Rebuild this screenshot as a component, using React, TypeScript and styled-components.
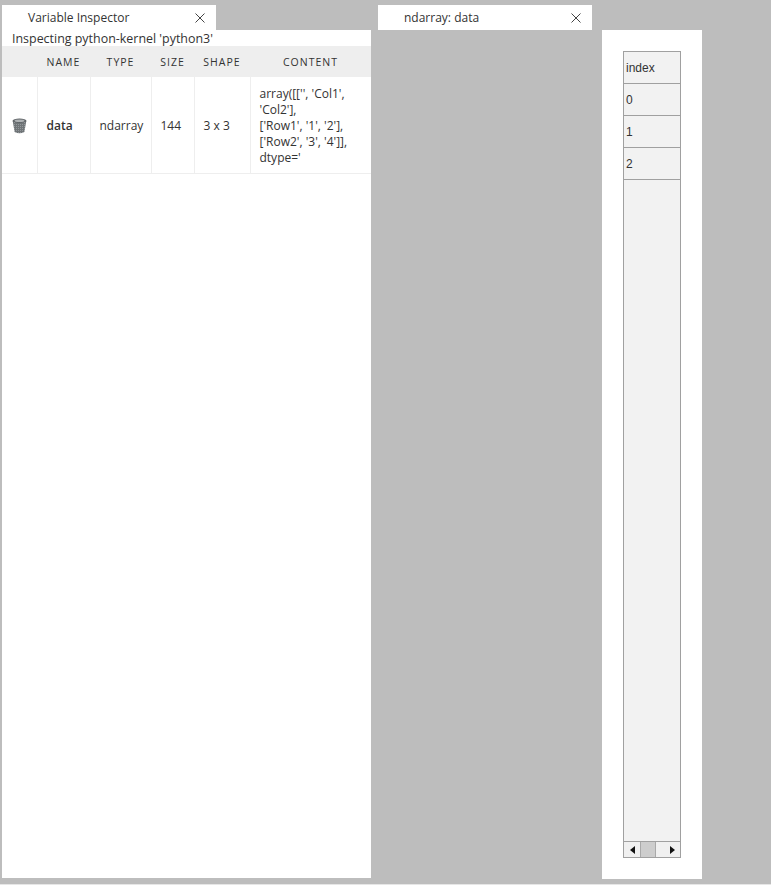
import styled, { createGlobalStyle } from 'styled-components'

const GlobalStyle = createGlobalStyle`
	html, body {
		margin: 0;
		padding: 0;
		height: 885px;
		overflow: hidden;
		background: #e6e6e6;
		font-family: 'Open Sans', 'Noto Sans', sans-serif;
		color: #333;
	}
`

const columns = [
	{ title: '', width: 35 },
	{ title: 'NAME', width: 53 },
	{ title: 'TYPE', width: 61 },
	{ title: 'SIZE', width: 43 },
	{ title: 'SHAPE', width: 56 },
	{ title: 'CONTENT', width: 121 },
]

function CloseIcon() {
	return (
		<svg width="10" height="10" viewBox="0 0 10 10">
			<path d="M0.5 0.5 L9.5 9.5 M9.5 0.5 L0.5 9.5" stroke="#444" strokeWidth="1" fill="none" />
		</svg>
	)
}

function TrashIcon() {
	return (
		<svg width="15" height="16" viewBox="0 0 15 16">
			<defs>
				<pattern id="mesh" width="2" height="2" patternUnits="userSpaceOnUse">
					<rect width="2" height="2" fill="#6f7477" />
					<rect width="1" height="1" fill="#92979a" />
				</pattern>
			</defs>
			<ellipse cx="7.5" cy="3" rx="7" ry="2.4" fill="#5f6467" />
			<ellipse cx="7.5" cy="2.8" rx="5" ry="1.2" fill="#aeb2b4" />
			<path d="M0.8 3.5 L2.6 14 Q7.5 16.5 12.4 14 L14.2 3.5 Q7.5 6.5 0.8 3.5 Z" fill="url(#mesh)" />
		</svg>
	)
}

export default function App() {
	return (
		<>
			<GlobalStyle />
			<Page>
				<InspectorColumn>
					<Tab>
						<TabTitle>Variable Inspector</TabTitle>
						<CloseIcon />
					</Tab>
					<InspectorPanel>
						<Heading>Inspecting python-kernel 'python3'</Heading>
						<VarTable>
							<colgroup>
								{columns.map((c) => (
									<col key={c.title} style={{ width: c.width }} />
								))}
							</colgroup>
							<thead>
								<tr>
									{columns.map((c) => (
										<HeadCell key={c.title}>{c.title}</HeadCell>
									))}
								</tr>
							</thead>
							<tbody>
								<tr>
									<IconCell>
										<TrashIcon />
									</IconCell>
									<NameCell>data</NameCell>
									<Cell>ndarray</Cell>
									<Cell>144</Cell>
									<Cell>3 x 3</Cell>
									<Cell>
										array([['', 'Col1',
										<br />
										'Col2'],
										<br />
										['Row1', '1', '2'],
										<br />
										['Row2', '3', '4']],
										<br />
										dtype='
									</Cell>
								</tr>
							</tbody>
						</VarTable>
					</InspectorPanel>
				</InspectorColumn>
				<DataTab>
					<TabTitle>ndarray: data</TabTitle>
					<CloseIcon />
				</DataTab>
				<GridPanel>
					<Grid>
						<GridRow>index</GridRow>
						<GridRow>0</GridRow>
						<GridRow>1</GridRow>
						<GridRow>2</GridRow>
						<GridBody />
						<ScrollBar>
							<ScrollButton>
								<Arrow $left />
							</ScrollButton>
							<ScrollThumb />
							<ScrollButton $grow>
								<Arrow />
							</ScrollButton>
						</ScrollBar>
					</Grid>
				</GridPanel>
			</Page>
		</>
	)
}

const Page = styled.div`
	height: 884px;
	box-sizing: border-box;
	display: flex;
	align-items: flex-start;
	padding: 5px 0 0 2px;
	background: #bdbdbd;
`
const InspectorColumn = styled.div`
	width: 369px;
	display: flex;
	flex-direction: column;
`
const Tab = styled.div`
	width: 214px;
	height: 25px;
	box-sizing: border-box;
	padding: 0 11px 0 26px;
	background: #fff;
	display: flex;
	align-items: center;
	justify-content: space-between;
`
const DataTab = styled(Tab)`
	margin-left: 7px;
`
const TabTitle = styled.span`
	font-size: 12px;
	color: #333;
`
const InspectorPanel = styled.div`
	height: 848px;
	background: #fff;
`
const Heading = styled.div`
	height: 16px;
	box-sizing: border-box;
	padding: 1px 0 0 10px;
	font-size: 12.45px;
	line-height: 16px;
	color: #333;
`
const VarTable = styled.table`
	width: 369px;
	table-layout: fixed;
	border-collapse: collapse;
`
const HeadCell = styled.th`
	height: 31px;
	padding: 0;
	background: #eeeeee;
	font-size: 10.5px;
	font-weight: 400;
	letter-spacing: 1px;
	text-align: center;
	color: #333;
`
const Cell = styled.td`
	height: 96px;
	box-sizing: border-box;
	padding: 2px 7px 0 9px;
	border-bottom: 1px solid #eeeeee;
	border-left: 1px solid #eeeeee;
	font-size: 12px;
	line-height: 16px;
	color: #333;
	white-space: nowrap;
`
const IconCell = styled(Cell)`
	padding: 2px 0 0 10px;
	border-left: none;

	svg {
		display: block;
	}
`
const NameCell = styled(Cell)`
	font-weight: 600;
`
const GridPanel = styled.div`
	margin: 25px 0 0 10px;
	width: 100px;
	height: 849px;
	box-sizing: border-box;
	padding: 21px 21px;
	background: #fff;
`
const Grid = styled.div`
	width: 58px;
	height: 807px;
	box-sizing: border-box;
	display: flex;
	flex-direction: column;
	background: #f2f2f2;
	border: 1px solid #a0a0a0;
`
const GridRow = styled.div`
	height: 32px;
	flex: none;
	box-sizing: border-box;
	padding: 1px 0 0 2px;
	border-bottom: 1px solid #a0a0a0;
	font-family: 'Liberation Sans', Arial, sans-serif;
	font-size: 12px;
	line-height: 31px;
	color: #333;
`
const GridBody = styled.div`
	flex: 1;
`
const ScrollBar = styled.div`
	height: 15px;
	flex: none;
	display: flex;
	border-top: 1px solid #a0a0a0;
	box-sizing: content-box;
`
const ScrollButton = styled.div<{ $grow?: boolean }>`
	width: 16px;
	flex: ${(p) => (p.$grow ? 1 : 'none')};
	box-sizing: border-box;
	padding: 0 ${(p) => (p.$grow ? '5px' : '0')} 0 0;
	background: #f0f0f0;
	display: flex;
	align-items: center;
	justify-content: ${(p) => (p.$grow ? 'flex-end' : 'center')};
`
const ScrollThumb = styled.div`
	width: 14px;
	flex: none;
	background: #cdcdcd;
	border-left: 1px solid #a9a9a9;
	border-right: 1px solid #a9a9a9;
`
const Arrow = styled.span<{ $left?: boolean }>`
	width: 0;
	height: 0;
	border-top: 4.5px solid transparent;
	border-bottom: 4.5px solid transparent;
	border-left: ${(p) => (p.$left ? 'none' : '5px solid #111')};
	border-right: ${(p) => (p.$left ? '5px solid #111' : 'none')};
`
